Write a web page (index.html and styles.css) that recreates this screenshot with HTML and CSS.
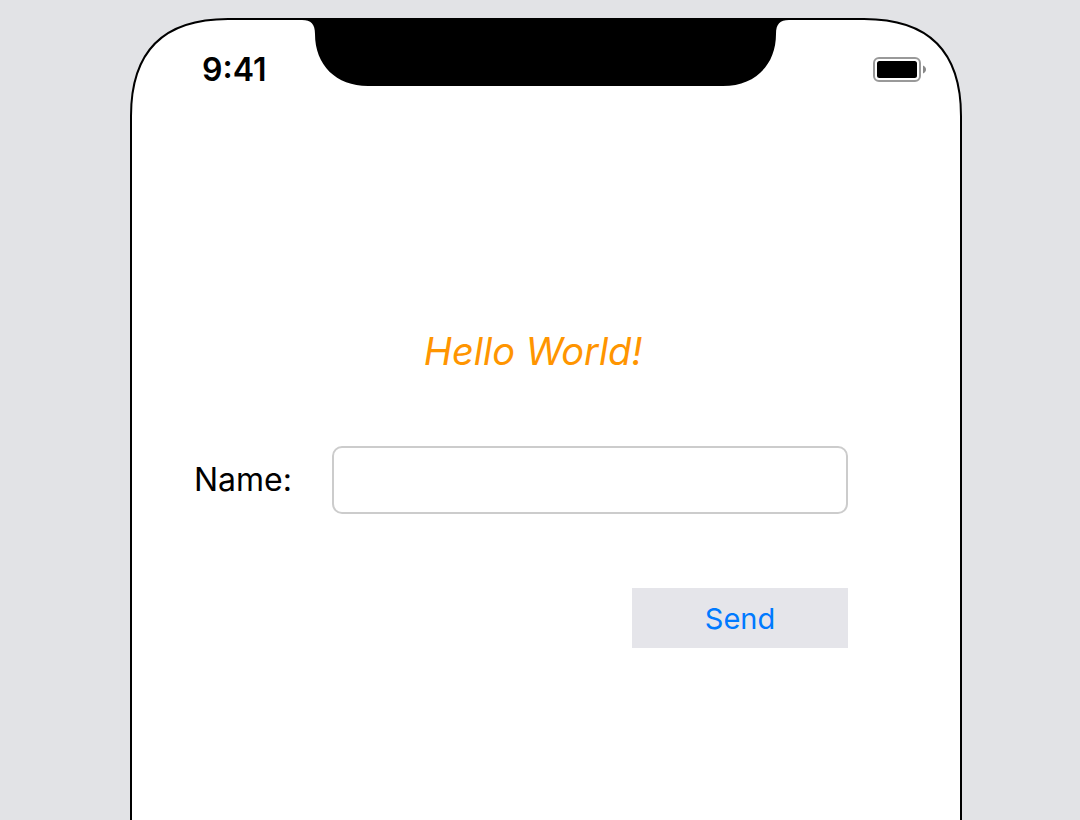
FILE: index.html
```html
<!DOCTYPE html>
<html lang="en">
<head>
    <meta charset="UTF-8">
    <meta name="viewport" content="width=device-width, initial-scale=1.0">
    <title>Hello World</title>
    <link rel="stylesheet" href="styles.css">
</head>
<body>
    <main class="phone">
        <header class="status-bar">
            <svg class="frame" viewBox="0 0 832 104" aria-hidden="true">
                <path d="M1 104V98C1 33 33 1 98 1H734C799 1 831 33 831 98V104" fill="#fff" stroke="#000" stroke-width="2"/>
                <path d="M172 0V2C181 2 185 6 185 16C185 47 206 68 238 68H593C625 68 646 47 646 16C646 6 650 2 659 2V0Z"/>
            </svg>
            <span class="time">9:41</span>
            <svg class="battery" width="54" height="26" viewBox="0 0 54 26" role="img" aria-label="Battery full">
                <rect x="1" y="1" width="46" height="23" rx="5" fill="none" stroke="#999" stroke-width="2"/>
                <rect x="4" y="4" width="40" height="17" rx="2.5"/>
                <path d="M50 8.500C54 10 54 15 50 16.500Z" fill="#888"/>
            </svg>
        </header>
        <form class="screen">
            <h1 class="title">Hello World!</h1>
            <div class="field">
                <label for="name">Name:</label>
                <input type="text" id="name" class="name-input">
            </div>
            <button type="button" class="send-button">Send</button>
        </form>
    </main>
</body>
</html>
```
FILE: styles.css
```css
* {
    box-sizing: border-box;
}
body {
    display: flex;
    min-height: 100vh;
    margin: 0;
    padding: 18px 118px 0 130px;
    background-color: #e2e3e6;
    color: #000;
    font-family: Inter, sans-serif;
}
.phone {
    display: flex;
    flex: 1;
    flex-direction: column;
    min-width: 0;
}
.status-bar {
    position: relative;
    display: flex;
    justify-content: space-between;
    align-items: center;
    aspect-ratio: 8 / 1;
    padding: 0 35px 0 72px;
}
.frame {
    position: absolute;
    top: 0;
    left: 0;
    width: 100%;
    height: 100%;
}
.time,
.battery {
    position: relative;
}
.time {
    font-size: 32px;
    font-weight: 600;
    line-height: 40px;
}
.screen {
    display: flex;
    flex: 1;
    flex-direction: column;
    padding: 204px 112px 0 62px;
    border: solid #000;
    border-width: 0 2px;
    background-color: #fff;
}
.title {
    margin: 0 0 70px 24px;
    color: #ff9500;
    font-size: 38px;
    font-style: italic;
    font-weight: 400;
    line-height: 50px;
    text-align: center;
}
.field {
    display: flex;
    align-items: center;
    margin-bottom: 74px;
}
.field label {
    width: 138px;
    font-size: 32px;
    line-height: 40px;
}
.name-input {
    flex: 1;
    min-width: 0;
    height: 68px;
    padding: 0 16px;
    border: 2px solid #ccc;
    border-radius: 10px;
    background-color: #fff;
    font-family: inherit;
    font-size: 32px;
}
.send-button {
    align-self: flex-end;
    width: 216px;
    height: 60px;
    border: none;
    background-color: #e5e5ea;
    color: #007aff;
    font-family: inherit;
    font-size: 29px;
    cursor: pointer;
}
```
